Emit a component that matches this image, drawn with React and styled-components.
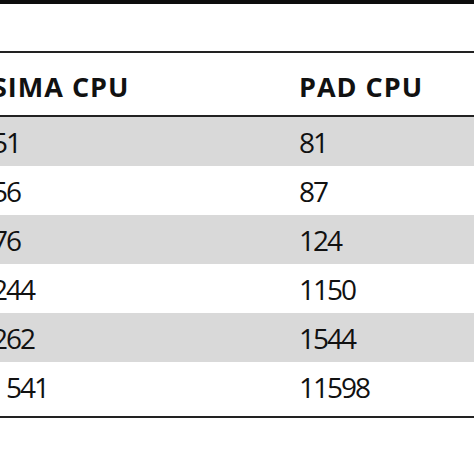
import React from "react";
import styled, { createGlobalStyle } from "styled-components";

const Global = createGlobalStyle`
  html, body { margin: 0; background: #fff; }
  body { overflow: hidden; }
`;

const Page = styled.div`
  width: 474px;
  height: 474px;
  overflow: hidden;
  border-top: 4px solid #0d0d0d;
  box-sizing: border-box;
  padding-top: 47px;
`;

const Table = styled.div`
  margin-left: -8px;
  width: calc(100% + 8px);
  display: grid;
  grid-template-columns: 307px 1fr;
  font-family: "Open Sans", "DejaVu Sans", sans-serif;
  color: #111;
  border-top: 2px solid #222;
  border-bottom: 2px solid #222;
`;

const HeadCell = styled.div`
  height: 64px;
  display: flex;
  align-items: center;
  padding-top: 4px;
  box-sizing: border-box;
  font-size: 27px;
  font-weight: 700;
  letter-spacing: 1px;
  border-bottom: 2px solid #222;
`;

const Cell = styled.div`
  height: ${(p) => (p.$last ? "54px" : "49px")};
  padding-bottom: ${(p) => (p.$last ? "5px" : "0")};
  box-sizing: border-box;
  display: flex;
  align-items: center;
  font-size: 28px;
  font-stretch: 92%;
  letter-spacing: -2px;
  background: ${(p) => (p.$shade ? "#d9d9d9" : "#fff")};
`;

const Figure = styled.span`
  visibility: hidden;
`;

const rows = [
  ["51", "81"],
  ["56", "87"],
  ["76", "124"],
  ["244", "1150"],
  ["262", "1544"],
  ["1541", "11598"],
];

export default function App() {
  return (
    <>
      <Global />
      <Page>
        <Table>
          <HeadCell>SIMA CPU</HeadCell>
          <HeadCell>PAD CPU</HeadCell>
          {rows.map(([a, b], i) => {
            const shade = i % 2 === 0;
            const last = i === rows.length - 1;
            return (
              <React.Fragment key={i}>
                <Cell $shade={shade} $last={last}>
                  {a.length > 3 ? (
                    <>
                      <Figure>{a[0]}</Figure>
                      {a.slice(1)}
                    </>
                  ) : (
                    a
                  )}
                </Cell>
                <Cell $shade={shade} $last={last}>
                  {b}
                </Cell>
              </React.Fragment>
            );
          })}
        </Table>
      </Page>
    </>
  );
}
